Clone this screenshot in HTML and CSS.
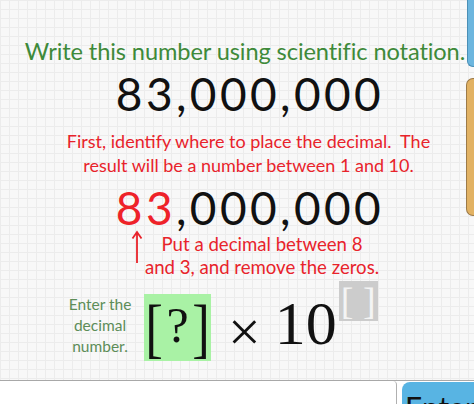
FILE: index.html
```html
<!DOCTYPE html>
<html>
<head>
<meta charset="utf-8">
<link rel="stylesheet" href="styles.css">
</head>
<body>
<div class="page">
  <main class="main">
    <h1 class="prompt">Write this number using scientific notation.</h1>
    <div class="bignum">83,000,000</div>
    <p class="hint">First, identify where to place the decimal.&nbsp; The<br>result will be a number between 1 and 10.</p>
    <div class="bignum second"><span class="red">83</span>,000,000</div>
    <div class="arrowrow">
      <svg class="arrow" width="12" height="34" viewBox="0 0 12 34" aria-hidden="true">
        <path d="M6 2 V33 M1.5 8.5 L6 2 L10.5 8.5" fill="none" stroke="#e8232b" stroke-width="1.8" stroke-linejoin="miter"/>
      </svg>
      <p class="hint2">Put a decimal between 8<br>and 3, and remove the zeros.</p>
    </div>
    <div class="answer">
      <div class="label">Enter the<br>decimal<br>number.</div>
      <div class="mantissa"><span class="br">[</span><span class="q">?</span><span class="br">]</span></div>
      <span class="times">×</span>
      <span class="ten">10</span>
      <div class="exp"><span class="ebr">[</span><span class="ebr">]</span></div>
    </div>
  </main>
  <div class="bottom">
    <div class="input"></div>
    <button class="enter">Enter</button>
  </div>
  <div class="tab tab-blue"></div>
  <div class="tab tab-orange"></div>
</div>
</body>
</html>
```
FILE: styles.css
```css
html, body {
  margin: 0;
  padding: 0;
}
body {
  width: 474px;
  height: 404px;
  overflow: hidden;
  font-family: Lato, "Noto Sans", sans-serif;
  background-color: #f8f8f8;
  background-image:
    linear-gradient(to right, #ececec 1px, transparent 1px),
    linear-gradient(to bottom, #ececec 1px, transparent 1px);
  background-size: 9px 9px;
}
.page {
  position: relative;
  width: 474px;
  height: 404px;
  display: flex;
  flex-direction: column;
}
.main {
  flex: 1;
  display: flex;
  flex-direction: column;
  align-items: center;
  padding-left: 23px;
}
.prompt {
  margin: 37px 0 0 -7px;
  font-weight: 400;
  font-size: 23.6px;
  line-height: 29px;
  color: #3e8a3a;
  white-space: nowrap;
  letter-spacing: -0.1px;
}
.bignum {
  margin-top: 5px;
  font-size: 46px;
  line-height: 46px;
  color: #111;
  letter-spacing: 3.4px;
  margin-right: -3px;
}
.second {
  margin-top: 8px;
}
.red {
  color: #ee2229;
}
.hint {
  margin: 12px 0 0 0;
  font-size: 18px;
  line-height: 24px;
  color: #e8232b;
  text-align: center;
}
.arrowrow {
  display: flex;
  align-self: flex-start;
  margin-left: 108px;
  margin-top: -2px;
}
.arrow {
  display: block;
  flex: none;
  margin-top: 1px;
  margin-right: 2px;
}
.hint2 {
  margin: 4px 0 0 0;
  font-size: 18.6px;
  line-height: 23px;
  color: #e8232b;
  text-align: center;
}
.answer {
  display: flex;
  align-items: flex-start;
  align-self: flex-start;
  margin-left: 45px;
  margin-top: 15px;
}
.label {
  width: 64px;
  margin-top: 0px;
  font-size: 15.5px;
  line-height: 21px;
  color: #5d8d58;
  text-align: center;
}
.mantissa {
  margin-left: 12px;
  width: 67px;
  height: 67px;
  background: #a9f2a5;
  display: flex;
  align-items: center;
  justify-content: center;
  font-family: "Liberation Serif", serif;
  color: #111;
}
.br {
  font-size: 66px;
  line-height: 66px;
  transform: scaleX(0.8);
  font-weight: 400;
}
.q {
  font-size: 50px;
  line-height: 50px;
  margin: -6px 1px 0 1px;
}
.times {
  margin-left: 17px;
  margin-top: 12px;
  font-family: "Liberation Serif", serif;
  font-size: 58px;
  line-height: 52px;
  color: #111;
}
.ten {
  margin-left: 14px;
  margin-top: -2px;
  font-family: "Liberation Serif", serif;
  font-size: 62px;
  line-height: 62px;
  color: #111;
}
.exp {
  margin-left: 2px;
  margin-top: -13px;
  width: 39px;
  height: 40px;
  background: #cccccc;
  display: flex;
  justify-content: space-between;
  align-items: center;
  padding: 0 2px;
  box-sizing: border-box;
  font-family: "Liberation Serif", serif;
  font-size: 38px;
  line-height: 38px;
  color: #f4f4f4;
}
.bottom {
  display: flex;
  height: 23px;
  border-top: 1px solid #a8a8a8;
  background: #ffffff;
}
.input {
  width: 396px;
  border-right: 1px solid #b0b0b0;
  border-top-right-radius: 4px;
  background: #fff;
}
.enter {
  margin: 1px 0 0 5px;
  flex: 1;
  border: none;
  border-top-left-radius: 8px;
  background: #58b4e3;
  font-family: Lato, sans-serif;
  font-size: 30px;
  line-height: 30px;
  color: #111;
  text-align: left;
  padding: 10px 0 0 3px;
  overflow: hidden;
  align-self: stretch;
  vertical-align: top;
}
.tab {
  position: absolute;
  right: 0;
  box-sizing: border-box;
}
.tab-blue {
  top: 0;
  width: 7px;
  height: 67px;
  background: #6cb6de;
  border: 1px solid #4a8fb6;
  border-right: none;
  border-top: none;
  border-bottom-left-radius: 6px;
}
.tab-orange {
  top: 78px;
  width: 8px;
  height: 138px;
  background: #e2b263;
  border: 1px solid #9c7a48;
  border-right: none;
  border-radius: 7px 0 0 7px;
}
```
